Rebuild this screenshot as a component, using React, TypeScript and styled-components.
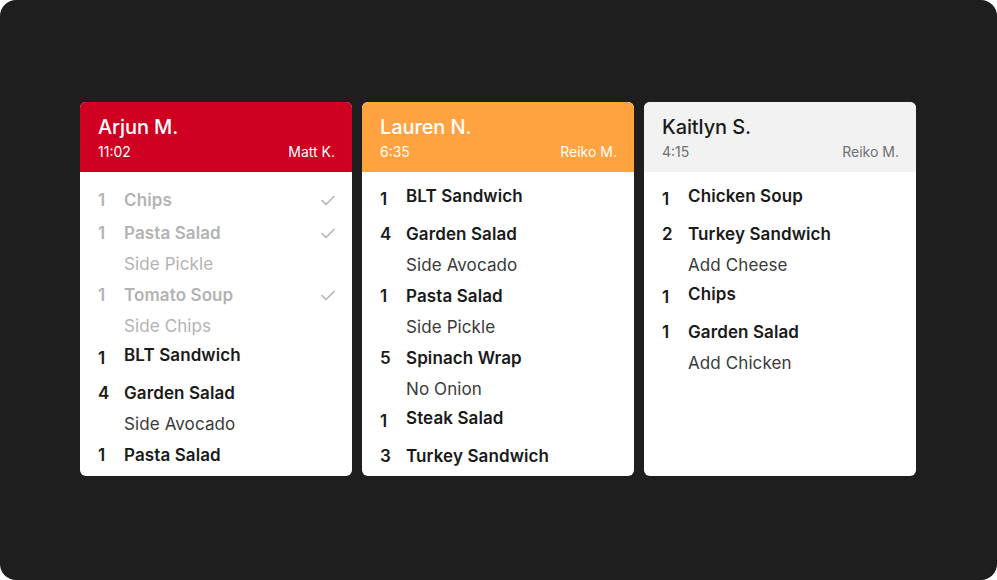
import React from 'react';
import styled, { createGlobalStyle } from 'styled-components';

type Tone = 'red' | 'orange' | 'grey';

interface OrderItem {
  qty: number;
  name: string;
  mods?: string[];
  done?: boolean;
}

interface Ticket {
  customer: string;
  time: string;
  server: string;
  tone: Tone;
  items: OrderItem[];
}

const tickets: Ticket[] = [
  {
    customer: 'Arjun M.',
    time: '11:02',
    server: 'Matt K.',
    tone: 'red',
    items: [
      { qty: 1, name: 'Chips', done: true },
      { qty: 1, name: 'Pasta Salad', mods: ['Side Pickle'], done: true },
      { qty: 1, name: 'Tomato Soup', mods: ['Side Chips'], done: true },
      { qty: 1, name: 'BLT Sandwich' },
      { qty: 4, name: 'Garden Salad', mods: ['Side Avocado'] },
      { qty: 1, name: 'Pasta Salad' },
    ],
  },
  {
    customer: 'Lauren N.',
    time: '6:35',
    server: 'Reiko M.',
    tone: 'orange',
    items: [
      { qty: 1, name: 'BLT Sandwich' },
      { qty: 4, name: 'Garden Salad', mods: ['Side Avocado'] },
      { qty: 1, name: 'Pasta Salad', mods: ['Side Pickle'] },
      { qty: 5, name: 'Spinach Wrap', mods: ['No Onion'] },
      { qty: 1, name: 'Steak Salad' },
      { qty: 3, name: 'Turkey Sandwich' },
    ],
  },
  {
    customer: 'Kaitlyn S.',
    time: '4:15',
    server: 'Reiko M.',
    tone: 'grey',
    items: [
      { qty: 1, name: 'Chicken Soup' },
      { qty: 2, name: 'Turkey Sandwich', mods: ['Add Cheese'] },
      { qty: 1, name: 'Chips' },
      { qty: 1, name: 'Garden Salad', mods: ['Add Chicken'] },
    ],
  },
];

const headerBg: Record<Tone, string> = {
  red: '#cf0022',
  orange: '#ffa240',
  grey: '#f2f2f2',
};

const GlobalStyle = createGlobalStyle`
  html, body {
    margin: 0;
    padding: 0;
    background: #ffffff;
  }
  body {
    font-family: Inter, "Open Sans", "Liberation Sans", sans-serif;
    -webkit-font-smoothing: antialiased;
  }
`;

const Frame = styled.div`
  width: 997px;
  height: 580px;
  box-sizing: border-box;
  background: #1e1e1e;
  border-radius: 16px;
  padding: 102px 0 0 80px;
`;

const Board = styled.div`
  display: grid;
  grid-template-columns: repeat(3, 272px);
  gap: 10px;
`;

const Card = styled.section`
  height: 374px;
  background: #ffffff;
  border-radius: 6px;
  overflow: hidden;
  display: flex;
  flex-direction: column;
`;

const Header = styled.header<{ $tone: Tone }>`
  height: 70px;
  box-sizing: border-box;
  padding: 13px 17px 0 18px;
  background: ${({ $tone }) => headerBg[$tone]};
  color: ${({ $tone }) => ($tone === 'grey' ? '#1a1a1a' : '#ffffff')};
`;

const Customer = styled.div`
  font-size: 20px;
  line-height: 24px;
  font-weight: 500;
  letter-spacing: -0.1px;
`;

const Meta = styled.div<{ $tone: Tone }>`
  display: flex;
  justify-content: space-between;
  margin-top: 4px;
  font-size: 14px;
  line-height: 18px;
  color: ${({ $tone }) => ($tone === 'grey' ? '#707070' : '#ffffff')};
`;

const Body = styled.div`
  padding: 11px 17px 0 18px;
`;

const Line = styled.div<{ $solo?: boolean; $done?: boolean }>`
  display: flex;
  align-items: ${({ $solo, $done }) => ($solo && !$done ? 'flex-start' : 'center')};
  height: ${({ $solo, $done }) => ($solo ? ($done ? 35 : 36) : 31)}px;
  line-height: ${({ $solo, $done }) => ($solo && !$done ? 27 : 31)}px;
  font-size: 17px;
  letter-spacing: 0.1px;
  color: ${({ $done }) => ($done ? '#b3b3b3' : '#1a1a1a')};
`;

const Qty = styled.span<{ $drop?: boolean }>`
  width: 26px;
  flex: none;
  font-weight: 600;
  padding-top: ${({ $drop }) => ($drop ? 3 : 0)}px;
`;

const Name = styled.span`
  flex: 1;
  font-weight: 600;
`;

const Modifier = styled.div<{ $done?: boolean }>`
  height: 31px;
  line-height: 31px;
  padding-left: 26px;
  font-size: 17px;
  letter-spacing: 0.1px;
  color: ${({ $done }) => ($done ? '#b3b3b3' : '#3a3a3a')};
`;

const Check = () => (
  <svg width="14" height="11" viewBox="0 0 14 11" fill="none">
    <path d="M1 5.5 L5 9.5 L13 1.5" stroke="#b3b3b3" strokeWidth="1.6" strokeLinecap="round" strokeLinejoin="round" />
  </svg>
);

const Item: React.FC<{ item: OrderItem; last: boolean }> = ({ item, last }) => {
  const solo = !last && (!item.mods || item.mods.length === 0);
  return (
    <>
      <Line $solo={solo} $done={item.done}>
        <Qty $drop={solo && !item.done}>{item.qty}</Qty>
        <Name>{item.name}</Name>
        {item.done && <Check />}
      </Line>
      {item.mods?.map((m) => (
        <Modifier key={m} $done={item.done}>
          {m}
        </Modifier>
      ))}
    </>
  );
};

const TicketCard: React.FC<{ ticket: Ticket }> = ({ ticket }) => (
  <Card>
    <Header $tone={ticket.tone}>
      <Customer>{ticket.customer}</Customer>
      <Meta $tone={ticket.tone}>
        <span>{ticket.time}</span>
        <span>{ticket.server}</span>
      </Meta>
    </Header>
    <Body>
      {ticket.items.map((it, i) => (
        <Item key={i} item={it} last={i === ticket.items.length - 1} />
      ))}
    </Body>
  </Card>
);

export default function App() {
  return (
    <>
      <GlobalStyle />
      <Frame>
        <Board>
          {tickets.map((t) => (
            <TicketCard key={t.customer} ticket={t} />
          ))}
        </Board>
      </Frame>
    </>
  );
}
